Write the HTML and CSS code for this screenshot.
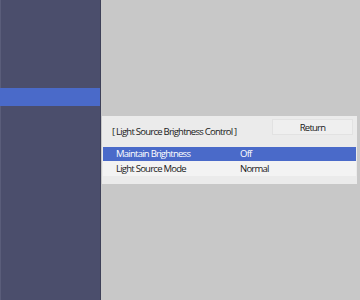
FILE: index.html
```html
<!DOCTYPE html>
<html>
<head>
<meta charset="utf-8">
<link rel="stylesheet" href="styles.css">
</head>
<body>
<div class="screen">
  <div class="sidebar">
    <div class="side-sel"></div>
  </div>
  <div class="main">
    <div class="panel">
      <div class="panel-head">
        <span class="title">[ Light Source Brightness Control ]</span>
        <div class="btn">Return</div>
      </div>
      <div class="row row-sel"><span class="label">Maintain Brightness</span><span class="value">Off</span></div>
      <div class="row"><span class="label">Light Source Mode</span><span class="value">Normal</span></div>
    </div>
  </div>
</div>
</body>
</html>
```
FILE: styles.css
```css
html, body {
  margin: 0;
  padding: 0;
}
body {
  font-family: "Open Sans", "Noto Sans", sans-serif;
  font-size: 9.5px;
  font-weight: 500;
  letter-spacing: -0.75px;
  color: #1a1a1a;
}
.screen {
  display: flex;
  width: 360px;
  height: 300px;
}
.sidebar {
  width: 100px;
  background: #4b4e6c;
  border-left: 1px solid #5a5d7a;
  box-sizing: border-box;
  padding-top: 88px;
}
.side-sel {
  height: 18px;
  background: #4a6ac9;
  margin-left: -1px;
}
.main {
  flex: 1;
  background: #c8c8c8;
  border-left: 1px solid #3e4058;
  padding: 116px 3px 0 1px;
}
.panel {
  background: #ebebeb;
  height: 68px;
  padding: 0 1px;
}
.panel-head {
  display: flex;
  justify-content: space-between;
  align-items: flex-start;
  height: 31px;
}
.title {
  padding: 9px 0 0 9px;
}
.btn {
  margin: 3px 3px 0 0;
  width: 81px;
  height: 16px;
  line-height: 15px;
  text-align: center;
  background: #efefef;
  border: 1px solid #e2e2e2;
  box-sizing: border-box;
}
.row {
  display: flex;
  height: 15px;
  line-height: 15px;
  background: #f3f3f3;
}
.row-sel {
  height: 14px;
  line-height: 14px;
  background: #4a6ac9;
  color: #fff;
}
.label {
  width: 124px;
  padding-left: 13px;
}
```
